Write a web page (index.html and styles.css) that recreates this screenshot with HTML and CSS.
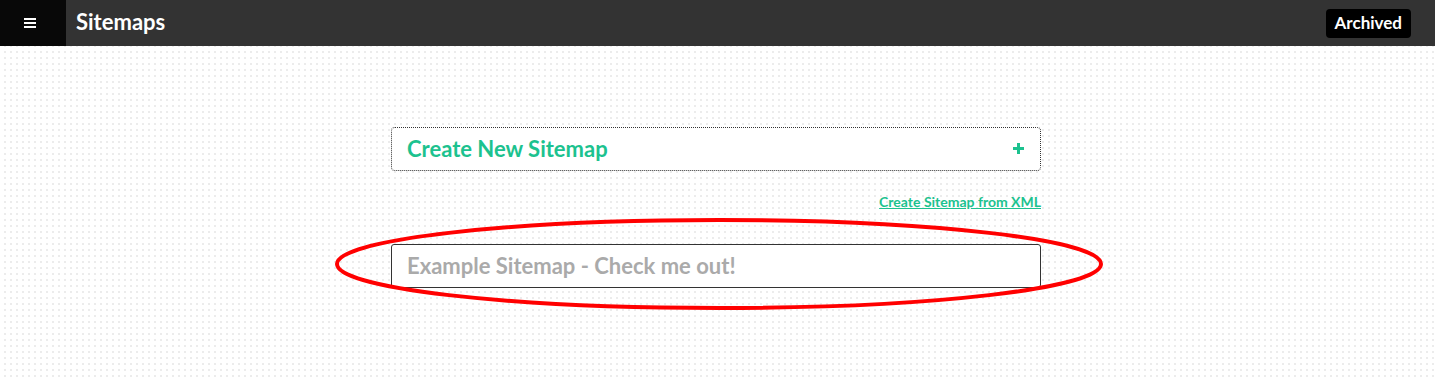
FILE: index.html
```html
<!DOCTYPE html>
<html>
<head>
<meta charset="utf-8">
<link rel="stylesheet" href="styles.css">
</head>
<body>
<header class="topbar">
  <div class="menu-btn">
    <svg width="12" height="10" viewBox="0 0 12 10"><rect x="0" y="0" width="12" height="2" fill="#fff"/><rect x="0" y="4" width="12" height="2" fill="#fff"/><rect x="0" y="8" width="12" height="2" fill="#fff"/></svg>
  </div>
  <h1 class="title">Sitemaps</h1>
  <span class="badge">Archived</span>
</header>
<main class="content">
  <div class="panel">
    <div class="create-card">
      <span class="create-text">Create New Sitemap</span>
      <svg class="plus" width="11" height="11" viewBox="0 0 11 11"><rect x="4" y="0" width="3" height="11" fill="#1cc28f"/><rect x="0" y="4" width="11" height="3" fill="#1cc28f"/></svg>
    </div>
    <div class="xml-row"><a class="xml-link" href="#">Create Sitemap from XML</a></div>
    <div class="sitemap-wrap">
      <div class="sitemap-item">Example Sitemap - Check me out!</div>
      <svg class="ring" width="772" height="96" viewBox="0 0 772 96"><ellipse cx="386" cy="48" rx="382" ry="44" fill="none" stroke="#ff0000" stroke-width="4"/></svg>
    </div>
  </div>
</main>
</body>
</html>
```
FILE: styles.css
```css
* { box-sizing: border-box; }
html, body { margin: 0; padding: 0; }
body {
  font-family: Lato, "Open Sans", sans-serif;
  width: 1435px;
  height: 378px;
  overflow: hidden;
  background-color: #fff;
  background-image:
    linear-gradient(90deg, #fff 4px, transparent 4px),
    linear-gradient(#fff 4px, #ececec 4px);
  background-size: 6px 6px;
  background-position: 0 -1px;
}
.topbar {
  height: 46px;
  background: #333;
  display: flex;
  align-items: center;
}
.menu-btn {
  width: 66px;
  height: 46px;
  background: #080808;
  display: flex;
  align-items: center;
  justify-content: center;
  padding-right: 6px;
}
.menu-btn svg { display: block; }
.title {
  margin: 0 0 0 10px;
  color: #fff;
  font-size: 22px;
  font-weight: 700;
  flex: 1;
  padding-bottom: 4px;
}
.badge {
  background: #000;
  color: #fff;
  font-weight: 700;
  font-size: 17px;
  border-radius: 4px;
  padding: 4px 9px 5px;
  margin-right: 24px;
  line-height: 20px;
}
.content {
  display: flex;
  justify-content: center;
  padding-top: 81px;
  padding-right: 3px;
}
.panel { width: 650px; }
.create-card {
  height: 44px;
  border: 1px dotted #333;
  border-radius: 4px;
  background: #fff;
  display: flex;
  align-items: center;
  justify-content: space-between;
  padding: 0 16px 0 15px;
}
.create-text {
  color: #1cc28f;
  font-size: 22px;
  font-weight: 700;
  padding-bottom: 2px;
}
.plus { display: block; margin-bottom: 2px; }
.xml-row {
  display: flex;
  justify-content: flex-end;
  margin-top: 22px;
}
.xml-link {
  color: #1cc28f;
  font-size: 14px;
  font-weight: 700;
  text-decoration: underline;
}
.sitemap-wrap {
  position: relative;
  margin-top: 34px;
}
.sitemap-item {
  height: 44px;
  border: 1px solid #333;
  border-radius: 3px;
  background: #fff;
  display: flex;
  align-items: center;
  padding: 0 15px 2px;
  color: #aaa;
  font-size: 22px;
  font-weight: 700;
}
.ring {
  position: absolute;
  left: -58px;
  top: -28px;
  pointer-events: none;
}
```
